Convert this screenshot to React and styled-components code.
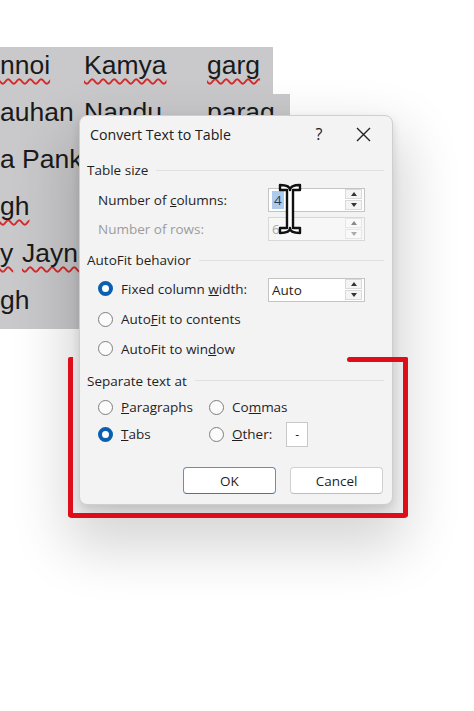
import styled, { createGlobalStyle } from "styled-components";

const GlobalStyle = createGlobalStyle`
  html, body {
    margin: 0;
    padding: 0;
    background: #ffffff;
  }
  * {
    box-sizing: border-box;
  }
`;

const rows = [
  { width: 273, words: [{ text: "nnoi", w: 84, wavy: true }, { text: "Kamya", w: 123, wavy: true }, { text: "garg", wavy: true }] },
  { width: 290, words: [{ text: "auhan", w: 84 }, { text: "Nandu", w: 123, wavy: true }, { text: "parag", wavy: true }] },
  { width: 290, words: [{ text: "a", w: 22 }, { text: "Pankaj" }] },
  { width: 290, words: [{ text: "gh", wavy: true }] },
  { width: 290, words: [{ text: "y", w: 22, wavy: true }, { text: "Jayna", wavy: true }] },
  { width: 290, words: [{ text: "gh" }] },
];

const Cursor = () => (
  <CursorSvg viewBox="0 0 24 52" width="24" height="52">
    <path
      d="M2 2 Q12 2 12 7 Q12 2 22 2 V7 H15 V45 H22 V50 Q12 50 12 45 Q12 50 2 50 V45 H9 V7 H2 Z"
      fill="#ffffff"
      stroke="#111111"
      strokeWidth="2.4"
      strokeLinejoin="round"
    />
  </CursorSvg>
);

const Spin = ({ value, disabled, selected }) => (
  <SpinBox disabled={disabled}>
    <SpinValue>{selected ? <Selection>{value}</Selection> : value}</SpinValue>
    <SpinArrows>
      <ArrowBtn disabled={disabled}>
        <Tri up disabled={disabled} />
      </ArrowBtn>
      <ArrowBtn disabled={disabled}>
        <Tri disabled={disabled} />
      </ArrowBtn>
    </SpinArrows>
  </SpinBox>
);

const Radio = ({ checked, children }) => (
  <RadioLabel>
    <RadioDot checked={checked} />
    <span>{children}</span>
  </RadioLabel>
);

const App = () => {
  return (
    <>
      <GlobalStyle />
      <Stage>
        <Document>
          {rows.map((row, i) => (
            <DocRow key={i} style={{ width: row.width }}>
              {row.words.map((word, j) => (
                <Word key={j} w={word.w} wavy={word.wavy}>
                  {word.text}
                </Word>
              ))}
            </DocRow>
          ))}
        </Document>

        <Dialog>
          <TitleBar>
            <Title>Convert Text to Table</Title>
            <TitleIcon>?</TitleIcon>
            <TitleIcon close>
              <svg width="15" height="15" viewBox="0 0 15 15">
                <path d="M1 1 L14 14 M14 1 L1 14" stroke="#222" strokeWidth="1.4" />
              </svg>
            </TitleIcon>
          </TitleBar>

          <Body>
            <Section>
              <GroupHeader>Table size</GroupHeader>
              <Rows>
                <FieldRow h={29}>
                  <FieldLabel>
                    Number of <u>c</u>olumns:
                  </FieldLabel>
                  <Spin value="4" selected />
                </FieldRow>
                <FieldRow h={29}>
                  <FieldLabel disabled>Number of rows:</FieldLabel>
                  <Spin value="6" disabled />
                </FieldRow>
              </Rows>
            </Section>

            <Section>
              <GroupHeader>AutoFit behavior</GroupHeader>
              <Rows>
                <FieldRow h={29.5}>
                  <FieldLabel>
                    <Radio checked>
                      Fixed column <u>w</u>idth:
                    </Radio>
                  </FieldLabel>
                  <Spin value="Auto" />
                </FieldRow>
                <FieldRow h={29.5}>
                  <Radio>
                    Auto<u>F</u>it to contents
                  </Radio>
                </FieldRow>
                <FieldRow h={29.5}>
                  <Radio>
                    AutoFit to win<u>d</u>ow
                  </Radio>
                </FieldRow>
              </Rows>
            </Section>

            <Section>
              <GroupHeader>Separate text at</GroupHeader>
              <SeparatorGrid>
                <Radio>
                  <u>P</u>aragraphs
                </Radio>
                <Radio>
                  Co<u>m</u>mas
                </Radio>
                <Radio checked>
                  <u>T</u>abs
                </Radio>
                <OtherCell>
                  <Radio>
                    <u>O</u>ther:
                  </Radio>
                  <OtherInput>-</OtherInput>
                </OtherCell>
              </SeparatorGrid>
            </Section>

            <Buttons>
              <Button primary>OK</Button>
              <Button>Cancel</Button>
            </Buttons>
          </Body>
        </Dialog>

        <Annotation />
        <Cursor />
      </Stage>
    </>
  );
};

const Stage = styled.div`
  position: relative;
  width: 474px;
  height: 711px;
  overflow: hidden;
  background: #ffffff;
`;

const Document = styled.div`
  padding-top: 47px;
  font-family: "Liberation Sans", Arial, sans-serif;
  font-size: 26.5px;
  color: #1a1a1a;
`;

const DocRow = styled.div`
  display: flex;
  height: 47px;
  padding-top: 3px;
  line-height: 30px;
  background: #c9c9cb;
  white-space: nowrap;
  overflow: hidden;
`;

const Word = styled.span`
  flex: 0 0 ${(p) => (p.w ? `${p.w}px` : "auto")};
  text-decoration: ${(p) => (p.wavy ? "underline wavy #d42a2a" : "none")};
  text-decoration-thickness: 1.5px;
  text-underline-offset: 4px;
  text-decoration-skip-ink: none;
`;

const Dialog = styled.div`
  position: absolute;
  left: 79px;
  top: 115px;
  width: 314px;
  height: 390px;
  background: #f3f3f3;
  border: 1px solid #cfcfcf;
  border-radius: 8px;
  box-shadow: 0 30px 55px 14px rgba(0, 0, 0, 0.16), 0 4px 10px rgba(0, 0, 0, 0.12);
  font-family: "Open Sans", "Noto Sans", sans-serif;
  font-size: 13.5px;
  color: #1b1b1b;
  display: flex;
  flex-direction: column;
`;

const TitleBar = styled.div`
  display: flex;
  align-items: center;
  height: 36px;
  padding-left: 10px;
`;

const Title = styled.div`
  flex: 1;
  font-size: 14.2px;
  color: #202020;
`;

const TitleIcon = styled.div`
  width: ${(p) => (p.close ? "58px" : "30px")};
  display: flex;
  justify-content: center;
  align-items: center;
  font-size: 16px;
  color: #202020;
`;

const Body = styled.div`
  display: flex;
  flex-direction: column;
  padding: 6px 8px 10px 7px;
  flex: 1;
`;

const Section = styled.div`
  display: flex;
  flex-direction: column;
  & + & {
    margin-top: 5px;
  }
`;

const GroupHeader = styled.div`
  display: flex;
  align-items: center;
  gap: 8px;
  height: 24px;
  color: #1f1f1f;
  &::after {
    content: "";
    flex: 1;
    height: 1px;
    background: #e1e1e1;
  }
`;

const Rows = styled.div`
  display: flex;
  flex-direction: column;
  padding-top: 3px;
  padding-left: 11px;
`;

const FieldRow = styled.div`
  display: flex;
  align-items: center;
  height: ${(p) => p.h}px;
`;

const FieldLabel = styled.div`
  width: 170px;
  color: ${(p) => (p.disabled ? "#9c9c9c" : "#1f1f1f")};
`;

const SpinBox = styled.div`
  display: flex;
  align-items: center;
  width: 97px;
  height: 24px;
  border: 1px solid ${(p) => (p.disabled ? "#d8d8d8" : "#c4c4c4")};
  background: ${(p) => (p.disabled ? "#f7f7f7" : "#ffffff")};
  color: ${(p) => (p.disabled ? "#a8a8a8" : "#1f1f1f")};
  padding-left: 3px;
`;

const SpinValue = styled.div`
  flex: 1;
  line-height: 18px;
`;

const Selection = styled.span`
  display: inline-block;
  background: #aecaec;
  color: #2b3a55;
  padding: 0 2px;
`;

const SpinArrows = styled.div`
  display: flex;
  flex-direction: column;
  gap: 1px;
  width: 17px;
  margin-right: 2px;
`;

const ArrowBtn = styled.div`
  height: 10px;
  border: 1px solid ${(p) => (p.disabled ? "#e6e6e6" : "#dadada")};
  background: ${(p) => (p.disabled ? "#f9f9f9" : "#f4f4f4")};
  display: flex;
  align-items: center;
  justify-content: center;
`;

const Tri = styled.div`
  width: 0;
  height: 0;
  border-left: 3.5px solid transparent;
  border-right: 3.5px solid transparent;
  ${(p) =>
    p.up
      ? `border-bottom: 4px solid ${p.disabled ? "#888" : "#333"};`
      : `border-top: 4px solid ${p.disabled ? "#aaa" : "#333"};`}
`;

const RadioLabel = styled.label`
  display: inline-flex;
  align-items: center;
  gap: 8px;
  color: #1f1f1f;
`;

const RadioDot = styled.span`
  width: 15px;
  height: 15px;
  border-radius: 50%;
  flex: none;
  ${(p) =>
    p.checked
      ? `background: #ffffff; border: 4.5px solid #0a5fb0;`
      : `background: #fbfbfb; border: 1px solid #7f7f7f;`}
`;

const SeparatorGrid = styled.div`
  display: grid;
  grid-template-columns: 111px auto;
  grid-auto-rows: 27px;
  align-items: center;
  padding-top: 1px;
  padding-left: 11px;
`;

const OtherCell = styled.div`
  display: flex;
  align-items: center;
  gap: 14px;
`;

const OtherInput = styled.div`
  width: 22px;
  height: 25px;
  border: 1px solid #c8c8c8;
  background: #ffffff;
  display: flex;
  align-items: center;
  justify-content: center;
  font-size: 12px;
`;

const Buttons = styled.div`
  display: flex;
  justify-content: flex-end;
  gap: 14px;
  margin-top: auto;
  padding-right: 1px;
`;

const Button = styled.div`
  width: 93px;
  height: 27px;
  display: flex;
  align-items: center;
  justify-content: center;
  background: #ffffff;
  border-radius: 4px;
  border: ${(p) => (p.primary ? "1.5px solid #6c8db0" : "1px solid #d0d0d0")};
  border-bottom-color: ${(p) => (p.primary ? "#4f7399" : "#bdbdbd")};
  color: #1f1f1f;
`;

const Annotation = styled.div`
  position: absolute;
  left: 68px;
  top: 357px;
  width: 340px;
  height: 161px;
  border: 5px solid #de0d19;
  border-top: none;
  border-radius: 2px 2px 4px 4px;
  &::before {
    content: "";
    position: absolute;
    top: 0;
    right: -5px;
    width: 61px;
    height: 5px;
    background: #de0d19;
    border-radius: 3px 3px 0 3px;
  }
`;

const CursorSvg = styled.svg`
  position: absolute;
  left: 278px;
  top: 183px;
`;

export default App;
